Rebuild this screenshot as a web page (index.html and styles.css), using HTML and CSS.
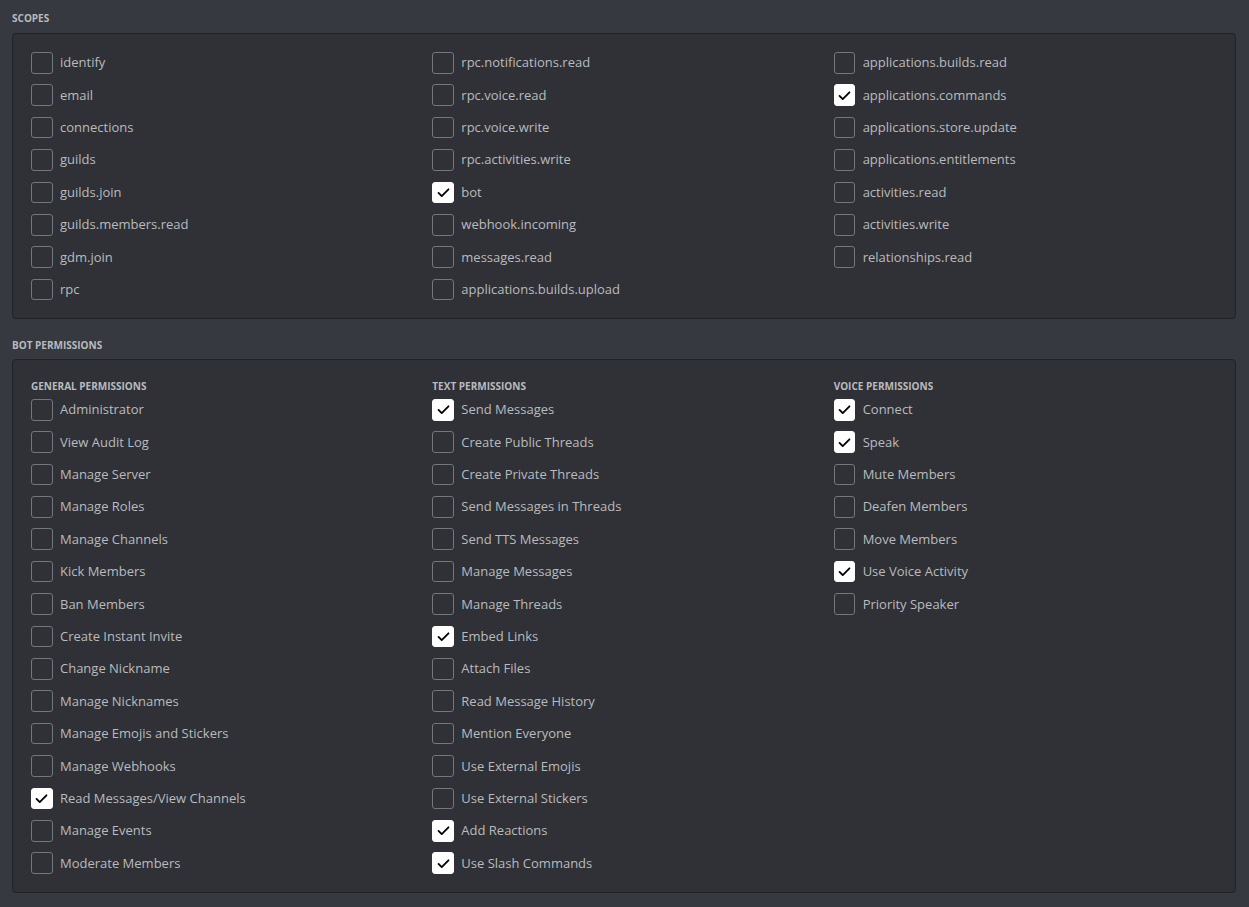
FILE: index.html
```html
<!DOCTYPE html>
<html>
<head>
<meta charset="utf-8">
<link rel="stylesheet" href="styles.css">
</head>
<body>
<div class="page">
  <h2 class="section-title">Scopes</h2>
  <div class="box">
    <div class="grid">
      <div class="col">
        <label class="item"><span class="cb"></span><span class="lbl">identify</span></label>
        <label class="item"><span class="cb"></span><span class="lbl">email</span></label>
        <label class="item"><span class="cb"></span><span class="lbl">connections</span></label>
        <label class="item"><span class="cb"></span><span class="lbl">guilds</span></label>
        <label class="item"><span class="cb"></span><span class="lbl">guilds.join</span></label>
        <label class="item"><span class="cb"></span><span class="lbl">guilds.members.read</span></label>
        <label class="item"><span class="cb"></span><span class="lbl">gdm.join</span></label>
        <label class="item"><span class="cb"></span><span class="lbl">rpc</span></label>
      </div>
      <div class="col">
        <label class="item"><span class="cb"></span><span class="lbl">rpc.notifications.read</span></label>
        <label class="item"><span class="cb"></span><span class="lbl">rpc.voice.read</span></label>
        <label class="item"><span class="cb"></span><span class="lbl">rpc.voice.write</span></label>
        <label class="item"><span class="cb"></span><span class="lbl">rpc.activities.write</span></label>
        <label class="item"><span class="cb on"><svg viewBox="0 0 24 24"><path d="M5 12.5l4.5 4.5L19 7.5"/></svg></span><span class="lbl">bot</span></label>
        <label class="item"><span class="cb"></span><span class="lbl">webhook.incoming</span></label>
        <label class="item"><span class="cb"></span><span class="lbl">messages.read</span></label>
        <label class="item"><span class="cb"></span><span class="lbl">applications.builds.upload</span></label>
      </div>
      <div class="col">
        <label class="item"><span class="cb"></span><span class="lbl">applications.builds.read</span></label>
        <label class="item"><span class="cb on"><svg viewBox="0 0 24 24"><path d="M5 12.5l4.5 4.5L19 7.5"/></svg></span><span class="lbl">applications.commands</span></label>
        <label class="item"><span class="cb"></span><span class="lbl">applications.store.update</span></label>
        <label class="item"><span class="cb"></span><span class="lbl">applications.entitlements</span></label>
        <label class="item"><span class="cb"></span><span class="lbl">activities.read</span></label>
        <label class="item"><span class="cb"></span><span class="lbl">activities.write</span></label>
        <label class="item"><span class="cb"></span><span class="lbl">relationships.read</span></label>
      </div>
    </div>
  </div>

  <h2 class="section-title second">Bot Permissions</h2>
  <div class="box">
    <div class="grid">
      <div class="col">
        <h3 class="col-title">General Permissions</h3>
        <label class="item"><span class="cb"></span><span class="lbl">Administrator</span></label>
        <label class="item"><span class="cb"></span><span class="lbl">View Audit Log</span></label>
        <label class="item"><span class="cb"></span><span class="lbl">Manage Server</span></label>
        <label class="item"><span class="cb"></span><span class="lbl">Manage Roles</span></label>
        <label class="item"><span class="cb"></span><span class="lbl">Manage Channels</span></label>
        <label class="item"><span class="cb"></span><span class="lbl">Kick Members</span></label>
        <label class="item"><span class="cb"></span><span class="lbl">Ban Members</span></label>
        <label class="item"><span class="cb"></span><span class="lbl">Create Instant Invite</span></label>
        <label class="item"><span class="cb"></span><span class="lbl">Change Nickname</span></label>
        <label class="item"><span class="cb"></span><span class="lbl">Manage Nicknames</span></label>
        <label class="item"><span class="cb"></span><span class="lbl">Manage Emojis and Stickers</span></label>
        <label class="item"><span class="cb"></span><span class="lbl">Manage Webhooks</span></label>
        <label class="item"><span class="cb on"><svg viewBox="0 0 24 24"><path d="M5 12.5l4.5 4.5L19 7.5"/></svg></span><span class="lbl">Read Messages/View Channels</span></label>
        <label class="item"><span class="cb"></span><span class="lbl">Manage Events</span></label>
        <label class="item"><span class="cb"></span><span class="lbl">Moderate Members</span></label>
      </div>
      <div class="col">
        <h3 class="col-title">Text Permissions</h3>
        <label class="item"><span class="cb on"><svg viewBox="0 0 24 24"><path d="M5 12.5l4.5 4.5L19 7.5"/></svg></span><span class="lbl">Send Messages</span></label>
        <label class="item"><span class="cb"></span><span class="lbl">Create Public Threads</span></label>
        <label class="item"><span class="cb"></span><span class="lbl">Create Private Threads</span></label>
        <label class="item"><span class="cb"></span><span class="lbl">Send Messages in Threads</span></label>
        <label class="item"><span class="cb"></span><span class="lbl">Send TTS Messages</span></label>
        <label class="item"><span class="cb"></span><span class="lbl">Manage Messages</span></label>
        <label class="item"><span class="cb"></span><span class="lbl">Manage Threads</span></label>
        <label class="item"><span class="cb on"><svg viewBox="0 0 24 24"><path d="M5 12.5l4.5 4.5L19 7.5"/></svg></span><span class="lbl">Embed Links</span></label>
        <label class="item"><span class="cb"></span><span class="lbl">Attach Files</span></label>
        <label class="item"><span class="cb"></span><span class="lbl">Read Message History</span></label>
        <label class="item"><span class="cb"></span><span class="lbl">Mention Everyone</span></label>
        <label class="item"><span class="cb"></span><span class="lbl">Use External Emojis</span></label>
        <label class="item"><span class="cb"></span><span class="lbl">Use External Stickers</span></label>
        <label class="item"><span class="cb on"><svg viewBox="0 0 24 24"><path d="M5 12.5l4.5 4.5L19 7.5"/></svg></span><span class="lbl">Add Reactions</span></label>
        <label class="item"><span class="cb on"><svg viewBox="0 0 24 24"><path d="M5 12.5l4.5 4.5L19 7.5"/></svg></span><span class="lbl">Use Slash Commands</span></label>
      </div>
      <div class="col">
        <h3 class="col-title">Voice Permissions</h3>
        <label class="item"><span class="cb on"><svg viewBox="0 0 24 24"><path d="M5 12.5l4.5 4.5L19 7.5"/></svg></span><span class="lbl">Connect</span></label>
        <label class="item"><span class="cb on"><svg viewBox="0 0 24 24"><path d="M5 12.5l4.5 4.5L19 7.5"/></svg></span><span class="lbl">Speak</span></label>
        <label class="item"><span class="cb"></span><span class="lbl">Mute Members</span></label>
        <label class="item"><span class="cb"></span><span class="lbl">Deafen Members</span></label>
        <label class="item"><span class="cb"></span><span class="lbl">Move Members</span></label>
        <label class="item"><span class="cb on"><svg viewBox="0 0 24 24"><path d="M5 12.5l4.5 4.5L19 7.5"/></svg></span><span class="lbl">Use Voice Activity</span></label>
        <label class="item"><span class="cb"></span><span class="lbl">Priority Speaker</span></label>
      </div>
    </div>
  </div>
</div>
</body>
</html>
```

FILE: styles.css
```css
html, body {
  margin: 0;
  padding: 0;
  background: #36393f;
}
body {
  font-family: "Open Sans", "Noto Sans", sans-serif;
  color: #b9bbbe;
}
.page {
  padding: 11px 13px 0 12px;
}
.section-title {
  margin: 0 0 8px 0;
  font-size: 10px;
  line-height: 14px;
  font-weight: 700;
  text-transform: uppercase;
  color: #b9bbbe;
  letter-spacing: 0;
}
.section-title.second {
  margin-top: 18.4px;
  margin-bottom: 7.2px;
}
.box {
  background: #2f3136;
  border: 1px solid #202225;
  border-radius: 4px;
  padding: 18px 0 18px 18px;
}
.grid {
  display: grid;
  grid-template-columns: repeat(3, 1fr);
}
.col {
  display: flex;
  flex-direction: column;
  gap: 10.8px;
}
.col-title {
  margin: 1.6px 0 -3.4px 0;
  font-size: 10px;
  line-height: 12px;
  font-weight: 700;
  text-transform: uppercase;
  color: #b9bbbe;
}
.item {
  display: flex;
  align-items: center;
  height: 21.6px;
}
.cb {
  box-sizing: border-box;
  width: 21.6px;
  height: 21.6px;
  border: 1px solid #72767d;
  border-radius: 3px;
  margin-right: 7.4px;
  display: flex;
  align-items: center;
  justify-content: center;
  flex: none;
}
.cb.on {
  background: #ffffff;
  border-color: #ffffff;
}
.cb svg {
  width: 17px;
  height: 17px;
}
.cb svg path {
  fill: none;
  stroke: #000;
  stroke-width: 2.6;
  stroke-linecap: round;
  stroke-linejoin: round;
}
.lbl {
  font-size: 13px;
  line-height: 18px;
  margin-top: -1px;
  color: #b9bbbe;
  white-space: nowrap;
}
```
